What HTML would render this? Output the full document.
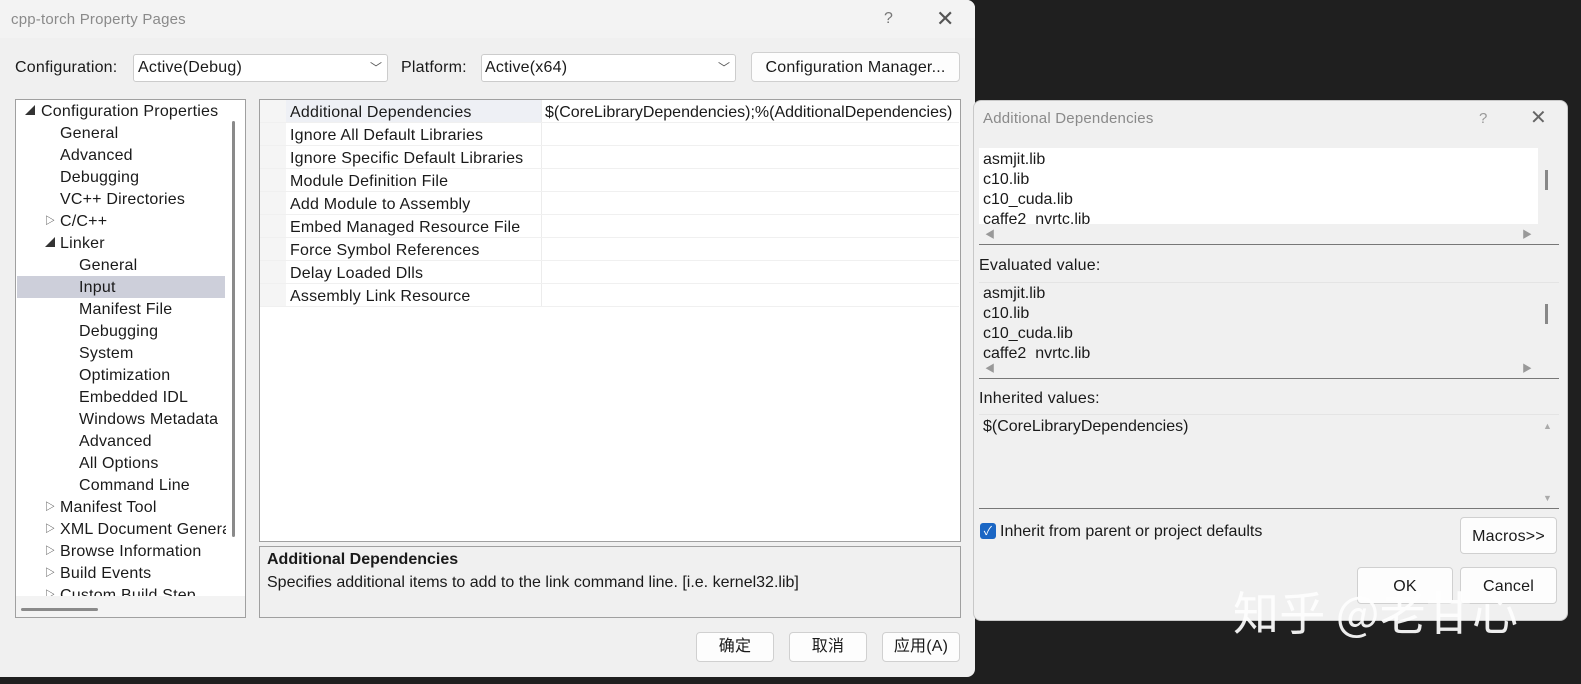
<!DOCTYPE html>
<html><head><meta charset="utf-8"><style>
*{margin:0;padding:0;box-sizing:border-box}
body{width:1581px;height:684px;background:#1f1f1f;position:relative;overflow:hidden;font-family:"Liberation Sans","Noto Sans CJK SC",sans-serif;font-size:16px;letter-spacing:0.2px;color:#1a1a1a}
.a{position:absolute;white-space:nowrap}
.btn{position:absolute;background:#fdfdfd;border:1px solid #d0d0d0;border-radius:4px;text-align:center;font-size:16px}
.tr{position:absolute;left:0;height:22px;line-height:24px}
.pr{position:absolute;left:0;width:699px;height:23px;line-height:25px;border-bottom:1px solid #f0f0f0}
.tri{font-size:10px;color:#333}
</style></head><body>
<div class="a" style="left:0;top:0;width:975px;height:677px;background:#f0f0f0;border-radius:0 8px 8px 0"></div>
<div class="a" style="left:0;top:0;width:975px;height:38px;background:#f3f3f3;border-radius:0 8px 0 0"></div>
<div class="a" style="left:11px;top:11px;color:#8a8a8a;font-size:15px">cpp-torch Property Pages</div>
<div class="a" style="left:884px;top:10px;color:#777;font-size:16px">?</div>
<div class="a" style="left:936px;top:6px;color:#555;font-size:22px;font-weight:300">✕</div>

<div class="a" style="left:15px;top:59px">Configuration:</div>
<div class="a" style="left:133px;top:54px;width:255px;height:28px;background:#fff;border:1px solid #ccc;border-radius:3px"></div>
<div class="a" style="left:138px;top:59px">Active(Debug)</div>
<div class="a" style="left:370px;top:59px;font-size:12px;color:#555">﹀</div>
<div class="a" style="left:401px;top:59px">Platform:</div>
<div class="a" style="left:481px;top:54px;width:255px;height:28px;background:#fff;border:1px solid #ccc;border-radius:3px"></div>
<div class="a" style="left:485px;top:59px">Active(x64)</div>
<div class="a" style="left:718px;top:59px;font-size:12px;color:#555">﹀</div>
<div class="btn" style="left:751px;top:52px;width:209px;height:30px;line-height:30px">Configuration Manager...</div>

<div class="a" style="left:15px;top:99px;width:231px;height:519px;background:#fff;border:1px solid #a0a0a0;overflow:hidden">
<div class="a" style="left:1px;top:176px;width:208px;height:22px;background:#cdcfda"></div>
<div class="tr" style="top:0"><span class="a tri" style="left:9px;top:0">◢</span><span class="a" style="left:25px">Configuration Properties</span></div>
<div class="tr" style="top:22px"><span class="a" style="left:44px">General</span></div>
<div class="tr" style="top:44px"><span class="a" style="left:44px">Advanced</span></div>
<div class="tr" style="top:66px"><span class="a" style="left:44px">Debugging</span></div>
<div class="tr" style="top:88px"><span class="a" style="left:44px">VC++ Directories</span></div>
<div class="tr" style="top:110px"><span class="a tri" style="left:29px">▷</span><span class="a" style="left:44px">C/C++</span></div>
<div class="tr" style="top:132px"><span class="a tri" style="left:29px">◢</span><span class="a" style="left:44px">Linker</span></div>
<div class="tr" style="top:154px"><span class="a" style="left:63px">General</span></div>
<div class="tr" style="top:176px"><span class="a" style="left:63px">Input</span></div>
<div class="tr" style="top:198px"><span class="a" style="left:63px">Manifest File</span></div>
<div class="tr" style="top:220px"><span class="a" style="left:63px">Debugging</span></div>
<div class="tr" style="top:242px"><span class="a" style="left:63px">System</span></div>
<div class="tr" style="top:264px"><span class="a" style="left:63px">Optimization</span></div>
<div class="tr" style="top:286px"><span class="a" style="left:63px">Embedded IDL</span></div>
<div class="tr" style="top:308px"><span class="a" style="left:63px">Windows Metadata</span></div>
<div class="tr" style="top:330px"><span class="a" style="left:63px">Advanced</span></div>
<div class="tr" style="top:352px"><span class="a" style="left:63px">All Options</span></div>
<div class="tr" style="top:374px"><span class="a" style="left:63px">Command Line</span></div>
<div class="tr" style="top:396px"><span class="a tri" style="left:29px">▷</span><span class="a" style="left:44px">Manifest Tool</span></div>
<div class="tr" style="top:418px"><span class="a tri" style="left:29px">▷</span><span class="a" style="left:44px">XML Document Genera</span></div>
<div class="tr" style="top:440px"><span class="a tri" style="left:29px">▷</span><span class="a" style="left:44px">Browse Information</span></div>
<div class="tr" style="top:462px"><span class="a tri" style="left:29px">▷</span><span class="a" style="left:44px">Build Events</span></div>
<div class="tr" style="top:484px"><span class="a tri" style="left:29px">▷</span><span class="a" style="left:44px">Custom Build Step</span></div>
<div class="a" style="left:210px;top:0;width:20px;height:518px;background:#fff"></div>
<div class="a" style="left:216px;top:21px;width:3px;height:416px;background:#8a8a8a;border-radius:2px"></div>
<div class="a" style="left:0;top:496px;width:230px;height:22px;background:#f3f3f3"></div>
<div class="a" style="left:5px;top:508px;width:77px;height:3px;background:#8a8a8a;border-radius:2px"></div>
</div>

<div class="a" style="left:259px;top:99px;width:702px;height:443px;background:#fff;border:1px solid #a0a0a0;overflow:hidden">
<div class="a" style="left:0;top:0;width:26px;height:207px;background:#f5f5f5"></div>
<div class="a" style="left:26px;top:0;width:255px;height:23px;background:#eef0f5"></div>
<div class="a" style="left:281px;top:0;width:1px;height:207px;background:#ececec"></div>
<div class="pr" style="top:0"><span class="a" style="left:30px">Additional Dependencies</span><span class="a" style="left:285px;letter-spacing:0">$(CoreLibraryDependencies);%(AdditionalDependencies)</span></div>
<div class="pr" style="top:23px"><span class="a" style="left:30px">Ignore All Default Libraries</span></div>
<div class="pr" style="top:46px"><span class="a" style="left:30px">Ignore Specific Default Libraries</span></div>
<div class="pr" style="top:69px"><span class="a" style="left:30px">Module Definition File</span></div>
<div class="pr" style="top:92px"><span class="a" style="left:30px">Add Module to Assembly</span></div>
<div class="pr" style="top:115px"><span class="a" style="left:30px">Embed Managed Resource File</span></div>
<div class="pr" style="top:138px"><span class="a" style="left:30px">Force Symbol References</span></div>
<div class="pr" style="top:161px"><span class="a" style="left:30px">Delay Loaded Dlls</span></div>
<div class="pr" style="top:184px"><span class="a" style="left:30px">Assembly Link Resource</span></div>
</div>
<div class="a" style="left:259px;top:546px;width:702px;height:72px;background:#f0f0f0;border:1px solid #a0a0a0"></div>
<div class="a" style="left:267px;top:551px;font-weight:bold;letter-spacing:0">Additional Dependencies</div>
<div class="a" style="left:267px;top:574px;letter-spacing:0">Specifies additional items to add to the link command line. [i.e. kernel32.lib]</div>

<div class="btn" style="left:696px;top:632px;width:78px;height:30px;line-height:28px">确定</div>
<div class="btn" style="left:789px;top:632px;width:78px;height:30px;line-height:28px">取消</div>
<div class="btn" style="left:882px;top:632px;width:78px;height:30px;line-height:28px">应用(A)</div>

<div class="a" style="left:973px;top:100px;width:595px;height:521px;background:#f0f0f0;border-radius:8px;border:1px solid #c8c8c8"></div>
<div class="a" style="left:983px;top:110px;color:#8a8a8a;font-size:15px">Additional Dependencies</div>
<div class="a" style="left:1479px;top:110px;color:#999;font-size:15px">?</div>
<div class="a" style="left:1530px;top:105px;color:#666;font-size:20px">✕</div>

<div class="a" style="left:979px;top:148px;width:580px;height:97px;background:#f0f0f0;border-bottom:1px solid #777"></div>
<div class="a" style="left:979px;top:148px;width:559px;height:76px;background:#fff;overflow:hidden;line-height:20px;padding:2px 4px;letter-spacing:0">asmjit.lib<br>c10.lib<br>c10_cuda.lib<br>caffe2_nvrtc.lib</div>
<div class="a" style="left:1545px;top:170px;width:3px;height:20px;background:#888"></div>
<div class="a" style="left:985px;top:226px;font-size:10px;color:#999">◀</div>
<div class="a" style="left:1522px;top:226px;font-size:10px;color:#999">▶</div>

<div class="a" style="left:979px;top:257px">Evaluated value:</div>
<div class="a" style="left:979px;top:282px;width:580px;height:97px;background:#f0f0f0;border-bottom:1px solid #777;border-top:1px solid #e4e4e4"></div>
<div class="a" style="left:979px;top:282px;width:559px;height:76px;overflow:hidden;line-height:20px;padding:2px 4px;letter-spacing:0">asmjit.lib<br>c10.lib<br>c10_cuda.lib<br>caffe2_nvrtc.lib</div>
<div class="a" style="left:1545px;top:304px;width:3px;height:20px;background:#888"></div>
<div class="a" style="left:985px;top:360px;font-size:10px;color:#999">◀</div>
<div class="a" style="left:1522px;top:360px;font-size:10px;color:#999">▶</div>

<div class="a" style="left:979px;top:390px">Inherited values:</div>
<div class="a" style="left:979px;top:414px;width:580px;height:95px;background:#f0f0f0;border-bottom:1px solid #777;border-top:1px solid #e4e4e4"></div>
<div class="a" style="left:983px;top:418px;letter-spacing:0">$(CoreLibraryDependencies)</div>
<div class="a" style="left:1543px;top:421px;font-size:9px;color:#aaa">▲</div>
<div class="a" style="left:1543px;top:493px;font-size:9px;color:#aaa">▼</div>

<div class="a" style="left:980px;top:523px;width:16px;height:16px;background:#1a66c4;border-radius:3px;color:#fff;font-size:12px;line-height:16px;text-align:center">✓</div>
<div class="a" style="left:1000px;top:523px;letter-spacing:0">Inherit from parent or project defaults</div>
<div class="btn" style="left:1460px;top:517px;width:97px;height:37px;line-height:37px">Macros&gt;&gt;</div>
<div class="btn" style="left:1357px;top:567px;width:96px;height:37px;line-height:37px">OK</div>
<div class="btn" style="left:1460px;top:567px;width:97px;height:37px;line-height:37px">Cancel</div>

<div class="a" style="left:1233px;top:583px;color:#fff;font-size:46px;line-height:56px;font-family:'Noto Sans CJK SC',sans-serif;opacity:0.92">知乎 @老甘心</div>
</body></html>
